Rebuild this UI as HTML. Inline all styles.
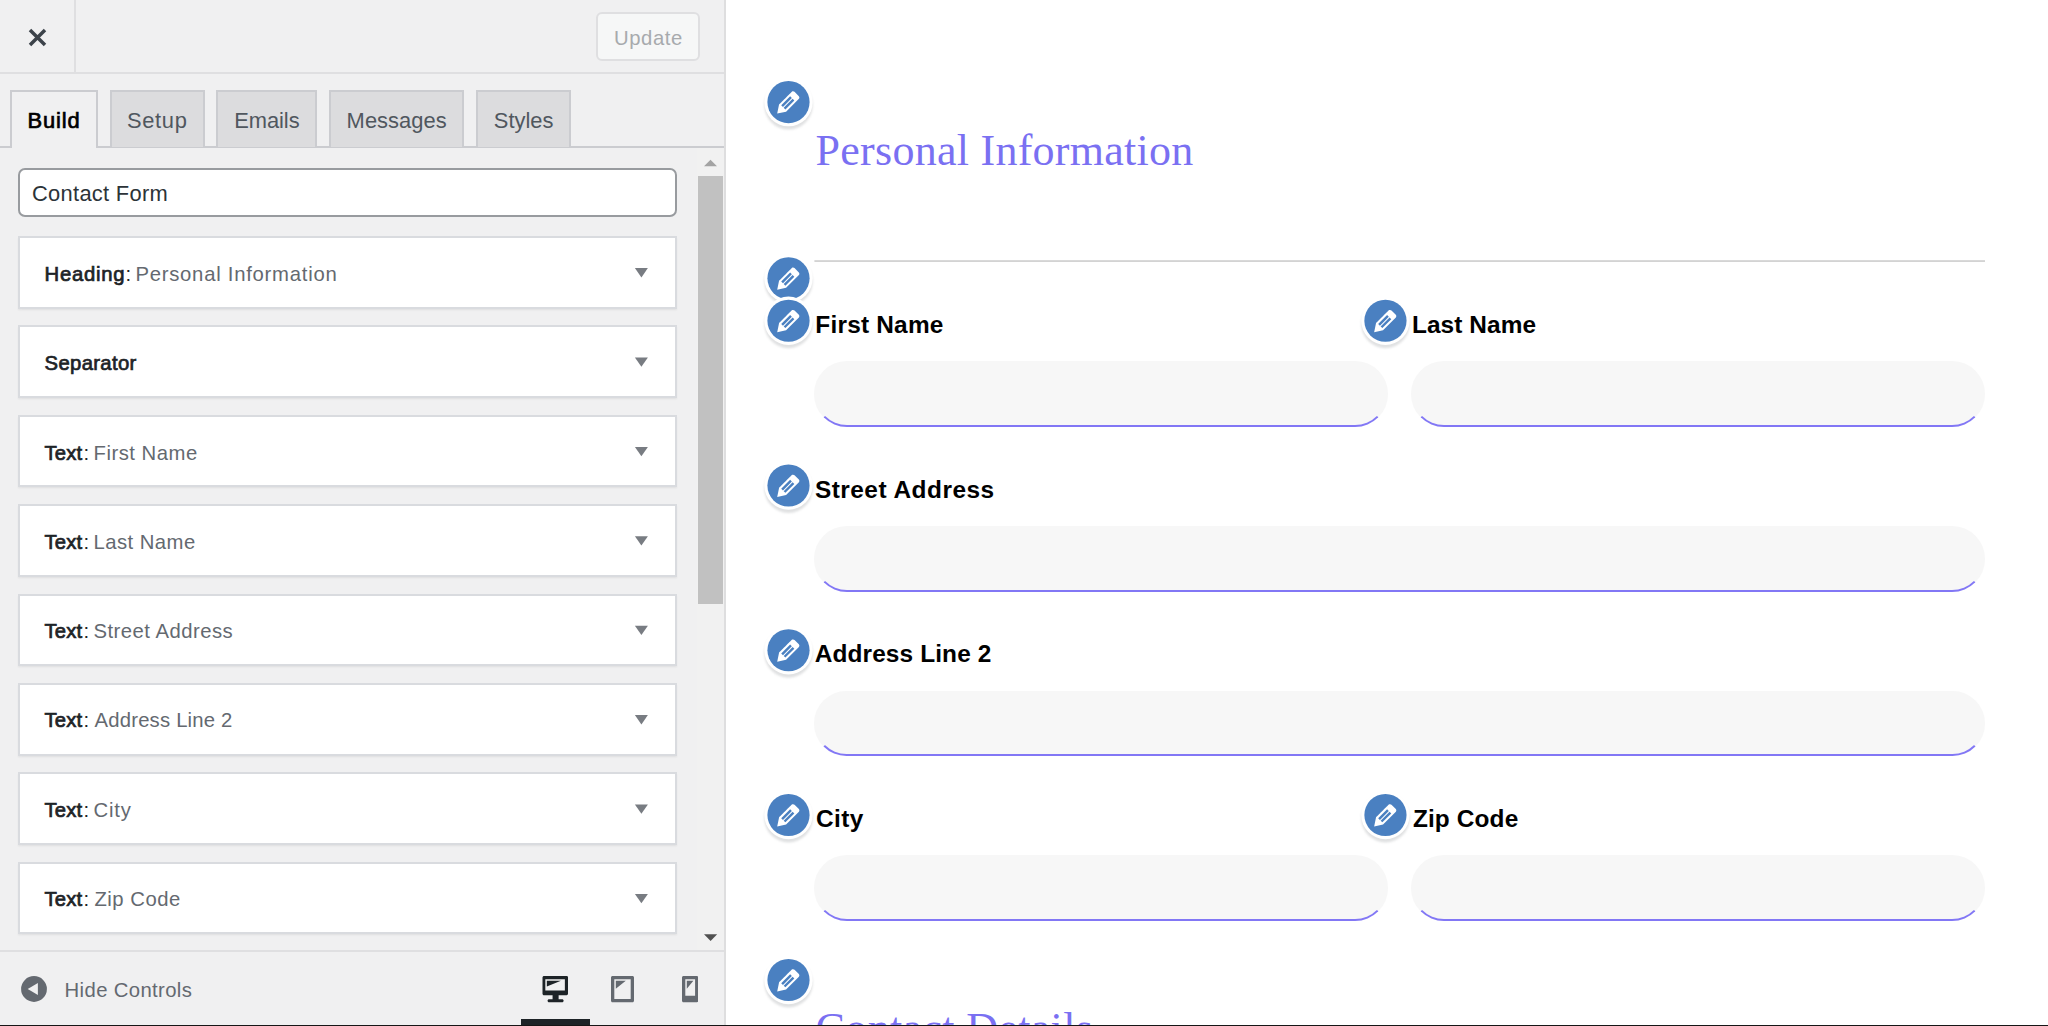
<!DOCTYPE html>
<html lang="en"><head><meta charset="utf-8"><title>Customize: Contact Form</title>
<style>
html,body{margin:0;padding:0;width:2048px;height:1026px;overflow:hidden;background:#fff;}
#app{width:2048px;height:1026px;overflow:hidden;position:relative;background:#fff;font-family:"Liberation Sans",sans-serif;}
*{box-sizing:border-box;}
.abs,.tx,.wd,.tab,.fld{position:absolute;}
.tx{white-space:nowrap;line-height:1;margin:0;padding:0;border:0;background:none;text-decoration:none;display:block;}
input.fld{display:block;margin:0;padding:0;outline:none;font:inherit;}
#side{position:absolute;left:0;top:0;width:726px;height:1025px;background:#f0f0f1;border-right:2px solid #dededf;}
#hdr{position:absolute;left:0;top:0;width:724px;height:74px;border-bottom:2px solid #dfdfe1;}
#cls{position:absolute;left:0;top:0;width:76px;height:72px;border-right:2px solid #dfdfe1;}
#upd{position:absolute;left:596px;top:12px;width:104px;height:48.6px;background:#f6f7f7;border:2px solid #dfdfe1;border-radius:6px;}
#tabline{position:absolute;left:0;top:146px;width:724px;height:2px;background:#cbccd0;}
.tab{top:90px;height:57px;background:#dcdcde;border:2px solid #cbccd0;border-bottom:none;}
.tab.act{background:#f0f0f1;height:58px;}
#ttl{position:absolute;left:18px;top:168px;width:659px;height:48.6px;background:#fff;border:2px solid #989b9f;border-radius:7px;}
.wd{left:18px;width:659px;height:72.6px;background:#fff;border:2px solid #d9dbdf;box-shadow:0 1.6px 1.6px rgba(0,0,0,.05);}
#sbt{position:absolute;left:697px;top:148px;width:27px;height:803px;background:#f1f1f1;}
#sbth{position:absolute;left:698px;top:176px;width:25px;height:428px;background:#c1c1c1;}
#ftr{position:absolute;left:0;top:950px;width:724px;height:75px;border-top:2px solid #dfdfe1;background:#f0f0f1;}
#actbar{position:absolute;left:521px;top:1018.6px;width:69px;height:6.4px;background:#1d2327;}
#blk{position:absolute;left:0;top:1025px;width:2048px;height:1px;background:#161616;}
.fld{height:65.8px;background:#f7f7f7;border:2px solid transparent;border-bottom-color:#8277f5;border-radius:33px;}
</style></head><body><div id="app">
<div id="side">
<div id="hdr"><div id="cls"><svg class="abs" style="left:27.8px;top:27.7px" width="19" height="19" viewBox="0 0 19 19"><path d="M2 2 L17 17 M17 2 L2 17" stroke="#3c434a" stroke-width="3.5" fill="none"/></svg></div><div id="upd"></div></div>
<div id="tabline"></div>
<div class="tab act" style="left:10.0px;width:88.0px"></div>
<div class="tab" style="left:110.0px;width:95.0px"></div>
<div class="tab" style="left:216.0px;width:101.0px"></div>
<div class="tab" style="left:329.0px;width:135.0px"></div>
<div class="tab" style="left:476.0px;width:95.0px"></div>
<div id="sbt"></div><div id="sbth"></div>
<div id="ttl"></div>
<div class="wd" style="top:236.0px"></div>
<div class="wd" style="top:325.4px"></div>
<div class="wd" style="top:414.8px"></div>
<div class="wd" style="top:504.2px"></div>
<div class="wd" style="top:593.6px"></div>
<div class="wd" style="top:683.0px"></div>
<div class="wd" style="top:772.4px"></div>
<div class="wd" style="top:861.8px"></div>
<div id="ftr"></div>
<svg class="abs" style="left:20.9px;top:975.6px" width="26" height="26" viewBox="0 0 26 26"><circle cx="13" cy="13" r="12.9" fill="#646970"/><path d="M6.700 13 L16.900 7.100 L16.900 18.900z" fill="#f0f0f1"/></svg>
<svg class="abs" style="left:542.2px;top:976.4px" width="26.2" height="26.2" viewBox="0 0 26 26"><path fill="#1d2327" fill-rule="evenodd" d="M1.500 0h23c.8 0 1.500.7 1.500 1.500v16c0 .8-.7 1.500-1.500 1.500h-8v4h3.500c.8 0 1.500.7 1.500 1.500s-.7 1.500-1.500 1.500h-13c-.8 0-1.500-.7-1.500-1.500s.7-1.500 1.500-1.500h3.500v-4h-8.500c-.8 0-1.500-.7-1.500-1.500v-16c0-.8.7-1.500 1.500-1.500zM3.300 3.300v11h19.400v-11zM4.800 4.800h14l-14 5.600z"/></svg>
<svg class="abs" style="left:611.3px;top:976.4px" width="23" height="26.2" viewBox="0 0 23 26.2"><path fill="#646970" fill-rule="evenodd" d="M1.500 0h20c.8 0 1.500.7 1.500 1.500v23.200c0 .8-.7 1.500-1.500 1.500h-20c-.8 0-1.500-.7-1.500-1.500v-23.200c0-.8.7-1.500 1.500-1.500zM3.300 3.300v19.600h16.400v-19.600zM4.800 4.800h10l-10 8z"/></svg>
<svg class="abs" style="left:682px;top:976.4px" width="16.4" height="26.2" viewBox="0 0 16.4 26.2"><path fill="#646970" fill-rule="evenodd" d="M1.500 0h13.400c.8 0 1.500.7 1.500 1.500v23.200c0 .8-.7 1.500-1.500 1.500h-13.400c-.8 0-1.500-.7-1.500-1.500v-23.200c0-.8.7-1.500 1.500-1.500zM3.300 3.300v16.400h9.800v-16.400zM4.800 4.800h6.600l-6.600 8z"/></svg>
<div id="actbar"></div>
</div>
<input type="text" class="fld" style="left:814.4px;top:361.0px;width:573.4px">
<input type="text" class="fld" style="left:1410.9px;top:361.0px;width:574.1px">
<input type="text" class="fld" style="left:814.4px;top:525.8px;width:1170.6px">
<input type="text" class="fld" style="left:814.4px;top:690.5px;width:1170.6px">
<input type="text" class="fld" style="left:814.4px;top:855.2px;width:573.4px">
<input type="text" class="fld" style="left:1410.9px;top:855.2px;width:574.1px">
<svg class="abs" style="left:0;top:0" width="2048" height="1026" viewBox="0 0 2048 1026">
<rect x="814.4" y="260.3" width="1170.6" height="1.5" fill="#c9c9c9"/>
<path d="M704 166.3 L710.5 159.8 L717 166.3z" fill="#a3a3a3"/><path d="M704 934.2 L710.6 940.9 L717.2 934.2z" fill="#505050"/>
<path d="M634.9 268.10 L647.9 268.10 L641.4 277.40z" fill="#787c82"/>
<path d="M634.9 357.50 L647.9 357.50 L641.4 366.80z" fill="#787c82"/>
<path d="M634.9 446.90 L647.9 446.90 L641.4 456.20z" fill="#787c82"/>
<path d="M634.9 536.30 L647.9 536.30 L641.4 545.60z" fill="#787c82"/>
<path d="M634.9 625.70 L647.9 625.70 L641.4 635.00z" fill="#787c82"/>
<path d="M634.9 715.10 L647.9 715.10 L641.4 724.40z" fill="#787c82"/>
<path d="M634.9 804.50 L647.9 804.50 L641.4 813.80z" fill="#787c82"/>
<path d="M634.9 893.90 L647.9 893.90 L641.4 903.20z" fill="#787c82"/>
<g transform="translate(788.50 102.10)"><circle cx="0" cy="3.2" r="24.2" fill="#3c434a" fill-opacity=".16" style="filter:blur(.8px)"/><circle cx="0" cy="0" r="24.2" fill="#fff"/><circle cx="0" cy="0" r="21.1" fill="#4a80c1"/><path transform="translate(-16.2 -15.7) scale(1.6)" fill="#fff" d="M13.89 3.39l2.71 2.72c.46.46.42 1.24.03 1.64l-8.01 8.02-5.56 1.16 1.16-5.58s7.6-7.63 7.990-8.030c.39-.39 1.220-.39 1.680.070zm-2.730 2.790l-5.590 5.610 1.110 1.110 5.540-5.650zm-2.970 8.230l5.580-5.600-1.070-1.080-5.590 5.600z"/></g>
<g transform="translate(788.50 278.30)"><circle cx="0" cy="3.2" r="24.2" fill="#3c434a" fill-opacity=".16" style="filter:blur(.8px)"/><circle cx="0" cy="0" r="24.2" fill="#fff"/><circle cx="0" cy="0" r="21.1" fill="#4a80c1"/><path transform="translate(-16.2 -15.7) scale(1.6)" fill="#fff" d="M13.89 3.39l2.71 2.72c.46.46.42 1.24.03 1.64l-8.01 8.02-5.56 1.16 1.16-5.58s7.6-7.63 7.990-8.030c.39-.39 1.220-.39 1.680.070zm-2.730 2.790l-5.590 5.610 1.110 1.110 5.540-5.650zm-2.970 8.230l5.580-5.600-1.070-1.080-5.590 5.600z"/></g>
<g transform="translate(788.50 320.75)"><circle cx="0" cy="3.2" r="24.2" fill="#3c434a" fill-opacity=".16" style="filter:blur(.8px)"/><circle cx="0" cy="0" r="24.2" fill="#fff"/><circle cx="0" cy="0" r="21.1" fill="#4a80c1"/><path transform="translate(-16.2 -15.7) scale(1.6)" fill="#fff" d="M13.89 3.39l2.71 2.72c.46.46.42 1.24.03 1.64l-8.01 8.02-5.56 1.16 1.16-5.58s7.6-7.63 7.990-8.030c.39-.39 1.220-.39 1.680.070zm-2.730 2.790l-5.590 5.610 1.110 1.110 5.540-5.650zm-2.970 8.230l5.580-5.600-1.070-1.080-5.590 5.600z"/></g>
<g transform="translate(788.50 485.50)"><circle cx="0" cy="3.2" r="24.2" fill="#3c434a" fill-opacity=".16" style="filter:blur(.8px)"/><circle cx="0" cy="0" r="24.2" fill="#fff"/><circle cx="0" cy="0" r="21.1" fill="#4a80c1"/><path transform="translate(-16.2 -15.7) scale(1.6)" fill="#fff" d="M13.89 3.39l2.71 2.72c.46.46.42 1.24.03 1.64l-8.01 8.02-5.56 1.16 1.16-5.58s7.6-7.63 7.990-8.030c.39-.39 1.220-.39 1.680.070zm-2.730 2.790l-5.590 5.610 1.110 1.110 5.540-5.650zm-2.970 8.230l5.580-5.600-1.070-1.080-5.590 5.600z"/></g>
<g transform="translate(788.50 650.25)"><circle cx="0" cy="3.2" r="24.2" fill="#3c434a" fill-opacity=".16" style="filter:blur(.8px)"/><circle cx="0" cy="0" r="24.2" fill="#fff"/><circle cx="0" cy="0" r="21.1" fill="#4a80c1"/><path transform="translate(-16.2 -15.7) scale(1.6)" fill="#fff" d="M13.89 3.39l2.71 2.72c.46.46.42 1.24.03 1.64l-8.01 8.02-5.56 1.16 1.16-5.58s7.6-7.63 7.990-8.030c.39-.39 1.220-.39 1.680.070zm-2.730 2.790l-5.590 5.610 1.110 1.110 5.540-5.650zm-2.970 8.230l5.580-5.600-1.070-1.080-5.590 5.600z"/></g>
<g transform="translate(788.50 815.00)"><circle cx="0" cy="3.2" r="24.2" fill="#3c434a" fill-opacity=".16" style="filter:blur(.8px)"/><circle cx="0" cy="0" r="24.2" fill="#fff"/><circle cx="0" cy="0" r="21.1" fill="#4a80c1"/><path transform="translate(-16.2 -15.7) scale(1.6)" fill="#fff" d="M13.89 3.39l2.71 2.72c.46.46.42 1.24.03 1.64l-8.01 8.02-5.56 1.16 1.16-5.58s7.6-7.63 7.990-8.030c.39-.39 1.220-.39 1.680.070zm-2.730 2.790l-5.590 5.610 1.110 1.110 5.540-5.650zm-2.970 8.230l5.580-5.600-1.070-1.080-5.590 5.600z"/></g>
<g transform="translate(788.50 980.00)"><circle cx="0" cy="3.2" r="24.2" fill="#3c434a" fill-opacity=".16" style="filter:blur(.8px)"/><circle cx="0" cy="0" r="24.2" fill="#fff"/><circle cx="0" cy="0" r="21.1" fill="#4a80c1"/><path transform="translate(-16.2 -15.7) scale(1.6)" fill="#fff" d="M13.89 3.39l2.71 2.72c.46.46.42 1.24.03 1.64l-8.01 8.02-5.56 1.16 1.16-5.58s7.6-7.63 7.990-8.030c.39-.39 1.220-.39 1.680.070zm-2.730 2.790l-5.590 5.610 1.110 1.110 5.540-5.650zm-2.970 8.230l5.580-5.600-1.070-1.080-5.590 5.600z"/></g>
<g transform="translate(1385.45 320.75)"><circle cx="0" cy="3.2" r="24.2" fill="#3c434a" fill-opacity=".16" style="filter:blur(.8px)"/><circle cx="0" cy="0" r="24.2" fill="#fff"/><circle cx="0" cy="0" r="21.1" fill="#4a80c1"/><path transform="translate(-16.2 -15.7) scale(1.6)" fill="#fff" d="M13.89 3.39l2.71 2.72c.46.46.42 1.24.03 1.64l-8.01 8.02-5.56 1.16 1.16-5.58s7.6-7.63 7.990-8.030c.39-.39 1.220-.39 1.680.070zm-2.730 2.790l-5.590 5.610 1.110 1.110 5.540-5.650zm-2.970 8.230l5.580-5.600-1.070-1.080-5.590 5.600z"/></g>
<g transform="translate(1385.45 815.00)"><circle cx="0" cy="3.2" r="24.2" fill="#3c434a" fill-opacity=".16" style="filter:blur(.8px)"/><circle cx="0" cy="0" r="24.2" fill="#fff"/><circle cx="0" cy="0" r="21.1" fill="#4a80c1"/><path transform="translate(-16.2 -15.7) scale(1.6)" fill="#fff" d="M13.89 3.39l2.71 2.72c.46.46.42 1.24.03 1.64l-8.01 8.02-5.56 1.16 1.16-5.58s7.6-7.63 7.990-8.030c.39-.39 1.220-.39 1.680.070zm-2.730 2.790l-5.590 5.610 1.110 1.110 5.540-5.650zm-2.970 8.230l5.580-5.600-1.070-1.080-5.590 5.600z"/></g>
</svg>
<button class="tx" id="t-update" style="left:613.90px;top:28.00px;font-size:20.30px;font-family:'Liberation Sans', sans-serif;font-weight:400;letter-spacing:0.600px;color:#a7aaad">Update</button>
<a class="tx" id="t-build" style="left:27.50px;top:110.00px;font-size:21.90px;font-family:'Liberation Sans', sans-serif;font-weight:400;letter-spacing:0.900px;color:#000;-webkit-text-stroke:0.70px #000">Build</a>
<a class="tx" id="t-setup" style="left:127.00px;top:110.00px;font-size:21.90px;font-family:'Liberation Sans', sans-serif;font-weight:400;letter-spacing:0.650px;color:#50575e">Setup</a>
<a class="tx" id="t-emails" style="left:234.30px;top:110.00px;font-size:21.90px;font-family:'Liberation Sans', sans-serif;font-weight:400;letter-spacing:-0.080px;color:#50575e">Emails</a>
<a class="tx" id="t-messages" style="left:346.60px;top:110.00px;font-size:21.90px;font-family:'Liberation Sans', sans-serif;font-weight:400;letter-spacing:0.057px;color:#50575e">Messages</a>
<a class="tx" id="t-styles" style="left:493.80px;top:110.00px;font-size:21.90px;font-family:'Liberation Sans', sans-serif;font-weight:400;letter-spacing:-0.000px;color:#50575e">Styles</a>
<div class="tx" id="t-title" style="left:32.00px;top:183.00px;font-size:21.90px;font-family:'Liberation Sans', sans-serif;font-weight:400;letter-spacing:0.291px;color:#2c3338">Contact Form</div>
<strong class="tx" id="t-w0a" style="left:44.60px;top:264.00px;font-size:20.30px;font-family:'Liberation Sans', sans-serif;font-weight:400;letter-spacing:0.733px;color:#1d2327;-webkit-text-stroke:0.70px #1d2327">Heading</strong>
<span class="tx" id="t-w0c" style="left:125.50px;top:264.00px;font-size:20.30px;font-family:'Liberation Sans', sans-serif;font-weight:400;letter-spacing:0.000px;color:#1d2327">:</span>
<span class="tx" id="t-w0b" style="left:135.40px;top:264.00px;font-size:20.30px;font-family:'Liberation Sans', sans-serif;font-weight:400;letter-spacing:0.747px;color:#646970">Personal Information</span>
<strong class="tx" id="t-w1a" style="left:44.60px;top:353.00px;font-size:20.30px;font-family:'Liberation Sans', sans-serif;font-weight:400;letter-spacing:0.325px;color:#1d2327;-webkit-text-stroke:0.70px #1d2327">Separator</strong>
<strong class="tx" id="t-w2a" style="left:44.60px;top:443.00px;font-size:20.30px;font-family:'Liberation Sans', sans-serif;font-weight:400;letter-spacing:0.133px;color:#1d2327;-webkit-text-stroke:0.70px #1d2327">Text</strong>
<span class="tx" id="t-w2c" style="left:83.50px;top:443.00px;font-size:20.30px;font-family:'Liberation Sans', sans-serif;font-weight:400;letter-spacing:0.000px;color:#1d2327">:</span>
<span class="tx" id="t-w2b" style="left:93.50px;top:443.00px;font-size:20.30px;font-family:'Liberation Sans', sans-serif;font-weight:400;letter-spacing:0.511px;color:#646970">First Name</span>
<strong class="tx" id="t-w3a" style="left:44.60px;top:532.00px;font-size:20.30px;font-family:'Liberation Sans', sans-serif;font-weight:400;letter-spacing:0.133px;color:#1d2327;-webkit-text-stroke:0.70px #1d2327">Text</strong>
<span class="tx" id="t-w3c" style="left:83.50px;top:532.00px;font-size:20.30px;font-family:'Liberation Sans', sans-serif;font-weight:400;letter-spacing:0.000px;color:#1d2327">:</span>
<span class="tx" id="t-w3b" style="left:93.50px;top:532.00px;font-size:20.30px;font-family:'Liberation Sans', sans-serif;font-weight:400;letter-spacing:0.450px;color:#646970">Last Name</span>
<strong class="tx" id="t-w4a" style="left:44.60px;top:621.00px;font-size:20.30px;font-family:'Liberation Sans', sans-serif;font-weight:400;letter-spacing:0.133px;color:#1d2327;-webkit-text-stroke:0.70px #1d2327">Text</strong>
<span class="tx" id="t-w4c" style="left:83.50px;top:621.00px;font-size:20.30px;font-family:'Liberation Sans', sans-serif;font-weight:400;letter-spacing:0.000px;color:#1d2327">:</span>
<span class="tx" id="t-w4b" style="left:93.50px;top:621.00px;font-size:20.30px;font-family:'Liberation Sans', sans-serif;font-weight:400;letter-spacing:0.477px;color:#646970">Street Address</span>
<strong class="tx" id="t-w5a" style="left:44.60px;top:710.00px;font-size:20.30px;font-family:'Liberation Sans', sans-serif;font-weight:400;letter-spacing:0.133px;color:#1d2327;-webkit-text-stroke:0.70px #1d2327">Text</strong>
<span class="tx" id="t-w5c" style="left:83.50px;top:710.00px;font-size:20.30px;font-family:'Liberation Sans', sans-serif;font-weight:400;letter-spacing:0.000px;color:#1d2327">:</span>
<span class="tx" id="t-w5b" style="left:94.50px;top:710.00px;font-size:20.30px;font-family:'Liberation Sans', sans-serif;font-weight:400;letter-spacing:0.200px;color:#646970">Address Line 2</span>
<strong class="tx" id="t-w6a" style="left:44.60px;top:800.00px;font-size:20.30px;font-family:'Liberation Sans', sans-serif;font-weight:400;letter-spacing:0.133px;color:#1d2327;-webkit-text-stroke:0.70px #1d2327">Text</strong>
<span class="tx" id="t-w6c" style="left:83.50px;top:800.00px;font-size:20.30px;font-family:'Liberation Sans', sans-serif;font-weight:400;letter-spacing:0.000px;color:#1d2327">:</span>
<span class="tx" id="t-w6b" style="left:93.50px;top:800.00px;font-size:20.30px;font-family:'Liberation Sans', sans-serif;font-weight:400;letter-spacing:0.800px;color:#646970">City</span>
<strong class="tx" id="t-w7a" style="left:44.60px;top:889.00px;font-size:20.30px;font-family:'Liberation Sans', sans-serif;font-weight:400;letter-spacing:0.133px;color:#1d2327;-webkit-text-stroke:0.70px #1d2327">Text</strong>
<span class="tx" id="t-w7c" style="left:83.50px;top:889.00px;font-size:20.30px;font-family:'Liberation Sans', sans-serif;font-weight:400;letter-spacing:0.000px;color:#1d2327">:</span>
<span class="tx" id="t-w7b" style="left:94.50px;top:889.00px;font-size:20.30px;font-family:'Liberation Sans', sans-serif;font-weight:400;letter-spacing:0.486px;color:#646970">Zip Code</span>
<button class="tx" id="t-hide" style="left:64.60px;top:980.00px;font-size:20.30px;font-family:'Liberation Sans', sans-serif;font-weight:400;letter-spacing:0.367px;color:#646970">Hide Controls</button>
<h3 class="tx" id="t-h1" style="left:815.60px;top:129.00px;font-size:44.00px;font-family:'Liberation Serif', serif;font-weight:400;letter-spacing:0.263px;color:#7a70f2">Personal Information</h3>
<h3 class="tx" id="t-h2" style="left:815.60px;top:1007.00px;font-size:44.00px;font-family:'Liberation Serif', serif;font-weight:400;letter-spacing:0.343px;color:#7a70f2">Contact Details</h3>
<label class="tx" id="t-l1" style="left:815.30px;top:313.00px;font-size:24.40px;font-family:'Liberation Sans', sans-serif;font-weight:700;letter-spacing:0.222px;color:#000">First Name</label>
<label class="tx" id="t-l2" style="left:1411.90px;top:313.00px;font-size:24.40px;font-family:'Liberation Sans', sans-serif;font-weight:700;letter-spacing:0.100px;color:#000">Last Name</label>
<label class="tx" id="t-l3" style="left:814.90px;top:478.00px;font-size:24.40px;font-family:'Liberation Sans', sans-serif;font-weight:700;letter-spacing:0.508px;color:#000">Street Address</label>
<label class="tx" id="t-l4" style="left:814.70px;top:642.00px;font-size:24.40px;font-family:'Liberation Sans', sans-serif;font-weight:700;letter-spacing:0.138px;color:#000">Address Line 2</label>
<label class="tx" id="t-l5" style="left:816.00px;top:807.00px;font-size:24.40px;font-family:'Liberation Sans', sans-serif;font-weight:700;letter-spacing:0.400px;color:#000">City</label>
<label class="tx" id="t-l6" style="left:1412.90px;top:807.00px;font-size:24.40px;font-family:'Liberation Sans', sans-serif;font-weight:700;letter-spacing:0.143px;color:#000">Zip Code</label>
<div id="blk"></div>
</div></body></html>
